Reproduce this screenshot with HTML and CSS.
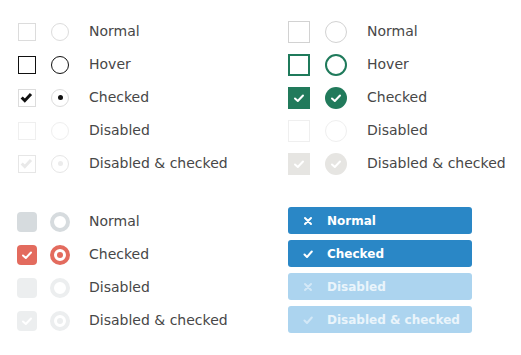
FILE: index.html
```html
<!DOCTYPE html>
<html lang="en">
<head>
<meta charset="UTF-8" />
<meta name="viewport" content="width=device-width, initial-scale=1" />
<title>Checkbox &amp; radio styles</title>
<link rel="stylesheet" href="styles.css">
</head>
<body>

<div class="sheet">

  <!-- Plain black theme -->
  <section class="set plain">
    <div class="row"><span class="box"></span><span class="dot"></span><span class="label">Normal</span></div>
    <div class="row hover"><span class="box"></span><span class="dot"></span><span class="label">Hover</span></div>
    <div class="row checked">
      <span class="box"><svg viewBox="0 0 18 18"><polyline points="3,8.5 6.5,12 13.5,4.5" /></svg></span>
      <span class="dot"></span><span class="label">Checked</span>
    </div>
    <div class="row disabled"><span class="box"></span><span class="dot"></span><span class="label">Disabled</span></div>
    <div class="row disabled checked">
      <span class="box"><svg viewBox="0 0 18 18"><polyline points="3,8.5 6.5,12 13.5,4.5" /></svg></span>
      <span class="dot"></span><span class="label">Disabled &amp; checked</span>
    </div>
  </section>

  <!-- Green theme -->
  <section class="set green">
    <div class="row"><span class="box"></span><span class="dot"></span><span class="label">Normal</span></div>
    <div class="row hover"><span class="box"></span><span class="dot"></span><span class="label">Hover</span></div>
    <div class="row checked">
      <span class="box"><svg viewBox="0 0 22 22"><polyline points="7,11.5 9.8,14 15,8.5" /></svg></span>
      <span class="dot"><svg viewBox="0 0 22 22"><polyline points="7,11.5 9.8,14 15,8.5" /></svg></span>
      <span class="label">Checked</span>
    </div>
    <div class="row disabled"><span class="box"></span><span class="dot"></span><span class="label">Disabled</span></div>
    <div class="row disabled checked">
      <span class="box"><svg viewBox="0 0 22 22"><polyline points="7,11.5 9.8,14 15,8.5" /></svg></span>
      <span class="dot"><svg viewBox="0 0 22 22"><polyline points="7,11.5 9.8,14 15,8.5" /></svg></span>
      <span class="label">Disabled &amp; checked</span>
    </div>
  </section>

  <!-- Soft red theme -->
  <section class="set soft">
    <div class="row"><span class="box"></span><span class="dot"></span><span class="label">Normal</span></div>
    <div class="row checked">
      <span class="box"><svg viewBox="0 0 20 20"><polyline points="6,10.5 8.8,13 14,7.5" /></svg></span>
      <span class="dot"></span><span class="label">Checked</span>
    </div>
    <div class="row disabled"><span class="box"></span><span class="dot"></span><span class="label">Disabled</span></div>
    <div class="row disabled checked">
      <span class="box"><svg viewBox="0 0 20 20"><polyline points="6,10.5 8.8,13 14,7.5" /></svg></span>
      <span class="dot"></span><span class="label">Disabled &amp; checked</span>
    </div>
  </section>

  <!-- Toggle buttons -->
  <section class="set toggles">
    <div class="row">
      <span class="toggle"><svg class="mark" viewBox="0 0 10 10"><path d="M2,2 L8,8 M8,2 L2,8" /></svg>Normal</span>
    </div>
    <div class="row">
      <span class="toggle"><svg class="mark" viewBox="0 0 10 10"><polyline points="1.5,5.5 4,8 8.8,2.5" /></svg>Checked</span>
    </div>
    <div class="row">
      <span class="toggle off"><svg class="mark" viewBox="0 0 10 10"><path d="M2,2 L8,8 M8,2 L2,8" /></svg>Disabled</span>
    </div>
    <div class="row">
      <span class="toggle off"><svg class="mark" viewBox="0 0 10 10"><polyline points="1.5,5.5 4,8 8.8,2.5" /></svg>Disabled &amp; checked</span>
    </div>
  </section>

</div>

</body>
</html>
```

FILE: styles.css
```css
body {
  margin: 0;
  background: #fff;
  font-family: "DejaVu Sans", sans-serif;
  color: #474747;
}

/* Page grid: two columns, two bands */
.sheet {
  display: grid;
  grid-template-columns: 270px 1fr;
  row-gap: 25px;
  padding-top: 15px;
}

.set {
  display: flex;
  flex-direction: column;
  padding-left: 18px;
}

.row {
  height: 33px;
  display: flex;
  align-items: center;
}

.label {
  font-size: 14px;
  margin-top: -2px;
}

.box, .dot {
  flex: none;
  display: flex;
  align-items: center;
  justify-content: center;
  box-sizing: border-box;
}

.box svg, .dot svg {
  width: 100%;
  height: 100%;
  fill: none;
}

/* Plain */
.plain .box, .plain .dot {
  width: 18px;
  height: 18px;
  border: 1px solid #dcdcdc;
}
.plain .dot {
  border-radius: 50%;
  margin-left: 15px;
  margin-right: 20px;
}
.plain .hover .box, .plain .hover .dot {
  border: 1.5px solid #111;
}
.plain .box svg polyline {
  stroke: #111;
  stroke-width: 3.4;
}
.plain .checked .dot::after {
  content: "";
  width: 5px;
  height: 5px;
  border-radius: 50%;
  background: #111;
}
.plain .disabled .box, .plain .disabled .dot {
  border-color: #efefef;
}
.plain .disabled.checked .box, .plain .disabled.checked .dot {
  border-color: #e6e6e6;
}
.plain .disabled.checked .box svg polyline {
  stroke: #e9e9e9;
}
.plain .disabled.checked .dot::after {
  background: #ececec;
}

/* Green */
.green .box, .green .dot {
  width: 22px;
  height: 22px;
  border: 1px solid #d2d2d2;
}
.green .dot {
  border-radius: 50%;
  margin-left: 15px;
  margin-right: 20px;
}
.green .hover .box, .green .hover .dot {
  border: 2px solid #1f7a5b;
}
.green .checked .box, .green .checked .dot {
  border: none;
  background: #217a5b;
}
.green svg polyline {
  stroke: #fff;
  stroke-width: 2;
  stroke-linecap: round;
  stroke-linejoin: round;
}
.green .disabled .box, .green .disabled .dot {
  border-color: #efefef;
}
.green .disabled.checked .box, .green .disabled.checked .dot {
  background: #e6e5e2;
}

/* Soft */
.soft {
  padding-left: 17px;
}
.soft .box, .soft .dot {
  width: 20px;
  height: 20px;
  background: #d6dbde;
  border-radius: 4px;
}
.soft .dot {
  border-radius: 50%;
  background: #fff;
  border: 4px solid #d6dbde;
  margin-left: 13px;
  margin-right: 19px;
}
.soft .checked .box {
  background: #e36b5e;
}
.soft .checked .dot {
  border-color: #e36b5e;
}
.soft .checked .dot::after {
  content: "";
  width: 6px;
  height: 6px;
  border-radius: 50%;
  background: #e36b5e;
}
.soft svg polyline {
  stroke: #fff;
  stroke-width: 2;
  stroke-linecap: round;
  stroke-linejoin: round;
}
.soft .disabled .box {
  background: #eceeef;
}
.soft .disabled .dot {
  border-color: #eceeef;
}
.soft .disabled.checked .dot::after {
  background: #eceeef;
}

/* Toggle buttons */
.toggles .row {
  margin-top: -1px;
  margin-bottom: 1px;
}
.toggle {
  width: 184px;
  height: 27px;
  box-sizing: border-box;
  display: flex;
  align-items: center;
  padding-left: 15px;
  border-radius: 3px;
  background: #2a87c6;
  color: #fff;
  font-size: 12px;
  font-weight: bold;
}
.toggle .mark {
  width: 10px;
  height: 10px;
  margin-right: 14px;
  fill: none;
  stroke: #fff;
  stroke-width: 2;
  stroke-linecap: round;
  stroke-linejoin: round;
}
.toggle.off {
  background: #acd4ef;
  color: #eaf4fb;
}
.toggle.off .mark {
  stroke: #d3e8f7;
}
```
